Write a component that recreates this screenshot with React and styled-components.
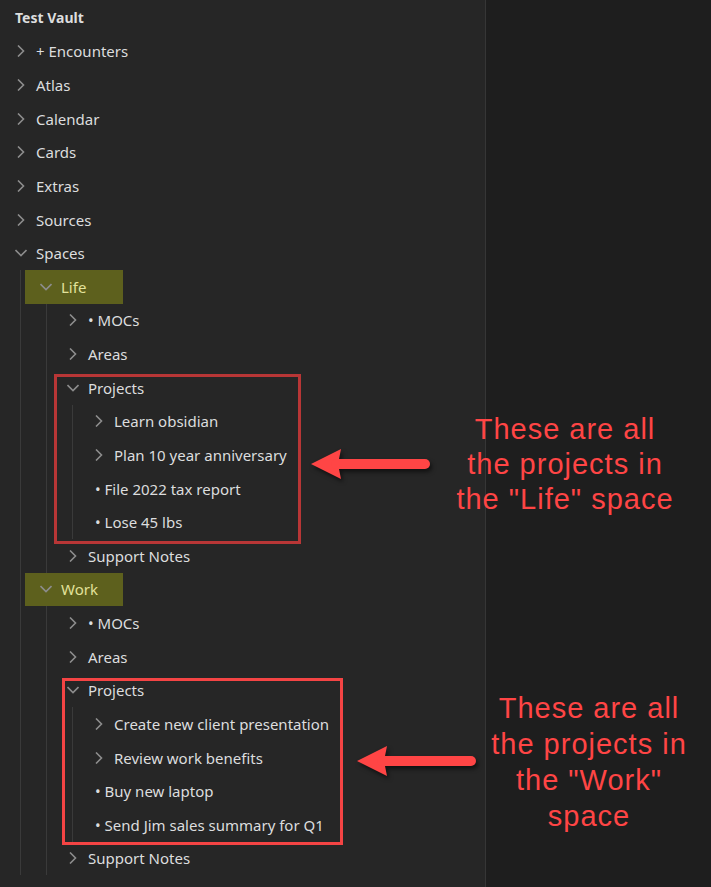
import React from 'react';
import styled, { createGlobalStyle } from 'styled-components';

const GlobalStyle = createGlobalStyle`
  html, body {
    margin: 0;
    padding: 0;
    background: #1e1e1e;
  }
  body {
    font-family: "Noto Sans", "Open Sans", sans-serif;
  }
`

const Page = styled.div`
  position: relative;
  display: flex;
  width: 711px;
  height: 887px;
  overflow: hidden;
`

const Sidebar = styled.nav`
  width: 486px;
  flex: none;
  background: #262626;
  border-right: 1px solid #363636;
  padding-top: 1px;
  box-sizing: border-box;
`

const Editor = styled.main`
  flex: 1;
  background: #1e1e1e;
`

const VaultTitle = styled.div`
  height: 33.64px;
  display: flex;
  align-items: center;
  padding-left: 15px;
  font-size: 14px;
  font-weight: 700;
  color: #dcddde;
`

const Row = styled.div`
  height: 33.64px;
  display: flex;
  align-items: center;
  box-sizing: border-box;
  padding-left: ${p => p.$file ? '17px' : '15px'};
  font-size: 15px;
  white-space: nowrap;
  color: ${p => p.$space ? '#e2e29b' : '#dcddde'};
  background: ${p => p.$space ? '#5d601d' : 'transparent'};
  width: ${p => p.$space ? '98px' : 'auto'};
  margin-left: ${p => p.$space ? '-1px' : '0'};
`

const Chevron = styled.span`
  width: 12px;
  height: 12px;
  flex: none;
  margin-right: 9px;
  display: flex;
  align-items: center;
  justify-content: center;
`

const Children = styled.div`
  margin-left: 20px;
  border-left: 1px solid #3a3a3a;
  padding-left: 5px;
`

// annotation layer drawn over the screenshot
const Frame = styled.div`
  position: absolute;
  left: ${p => p.$x}px;
  top: ${p => p.$y}px;
  width: ${p => p.$w}px;
  height: ${p => p.$h}px;
  box-sizing: border-box;
  border: 3px solid ${p => p.$color};
  pointer-events: none;
`

const Note = styled.div`
  position: absolute;
  left: ${p => p.$x}px;
  top: ${p => p.$y}px;
  width: 260px;
  text-align: center;
  font-family: "Liberation Sans", Arial, sans-serif;
  font-size: 29px;
  letter-spacing: 1px;
  line-height: ${p => p.$lh}px;
  color: #ff4545;
`

const ArrowBox = styled.svg`
  position: absolute;
  left: ${p => p.$x}px;
  top: ${p => p.$y}px;
  overflow: visible;
  filter: drop-shadow(2px 3px 2px rgba(0, 0, 0, 0.55));
`

const ChevronIcon = ({ open }) => (
  <svg width="12" height="12" viewBox="0 0 12 12">
    {open
      ? <path d="M0.5 3 L6 8.5 L11.5 3" fill="none" stroke="#8c8c8c" strokeWidth="1.6" />
      : <path d="M3 0.5 L8.5 6 L3 11.5" fill="none" stroke="#8c8c8c" strokeWidth="1.6" />}
  </svg>
)

const Arrow = ({ x, y }) => (
  <ArrowBox $x={x} $y={y} width="124" height="34" viewBox="0 0 124 34">
    <path d="M3 17 L33 2 L30 17 L33 32 Z" fill="#ff4545" />
    <line x1="28" y1="17" x2="117" y2="17" stroke="#ff4545" strokeWidth="10" strokeLinecap="round" />
  </ArrowBox>
)

const tree = [
  { name: '+ Encounters' },
  { name: 'Atlas' },
  { name: 'Calendar' },
  { name: 'Cards' },
  { name: 'Extras' },
  { name: 'Sources' },
  {
    name: 'Spaces', open: true, children: [
      {
        name: 'Life', open: true, space: true, children: [
          { name: '• MOCs' },
          { name: 'Areas' },
          {
            name: 'Projects', open: true, children: [
              { name: 'Learn obsidian' },
              { name: 'Plan 10 year anniversary' },
              { name: '• File 2022 tax report', file: true },
              { name: '• Lose 45 lbs', file: true },
            ]
          },
          { name: 'Support Notes' },
        ]
      },
      {
        name: 'Work', open: true, space: true, children: [
          { name: '• MOCs' },
          { name: 'Areas' },
          {
            name: 'Projects', open: true, children: [
              { name: 'Create new client presentation' },
              { name: 'Review work benefits' },
              { name: '• Buy new laptop', file: true },
              { name: '• Send Jim sales summary for Q1', file: true },
            ]
          },
          { name: 'Support Notes' },
        ]
      },
    ]
  },
]

const TreeItem = ({ item }) => {
  if (item.file) {
    return <Row $file>{item.name}</Row>
  }
  return (
    <div>
      <Row $space={item.space}>
        <Chevron><ChevronIcon open={item.open} /></Chevron>
        {item.name}
      </Row>
      {item.open && item.children && (
        <Children>
          {item.children.map((child, i) => <TreeItem key={i} item={child} />)}
        </Children>
      )}
    </div>
  )
}

const App = () => {
  return (
    <Page>
      <GlobalStyle />
      <Sidebar>
        <VaultTitle>Test Vault</VaultTitle>
        {tree.map((item, i) => <TreeItem key={i} item={item} />)}
      </Sidebar>
      <Editor />

      <Frame $x={54} $y={374} $w={247} $h={170} $color="#b83636" />
      <Frame $x={62} $y={678} $w={281} $h={167} $color="#f44444" />

      <Arrow x={308} y={447} />
      <Arrow x={354} y={744} />

      <Note $x={435} $y={412} $lh={35}>
        These are all<br />the projects in<br />the "Life" space
      </Note>
      <Note $x={459} $y={690} $lh={36}>
        These are all<br />the projects in<br />the "Work"<br />space
      </Note>
    </Page>
  )
}

export default App
